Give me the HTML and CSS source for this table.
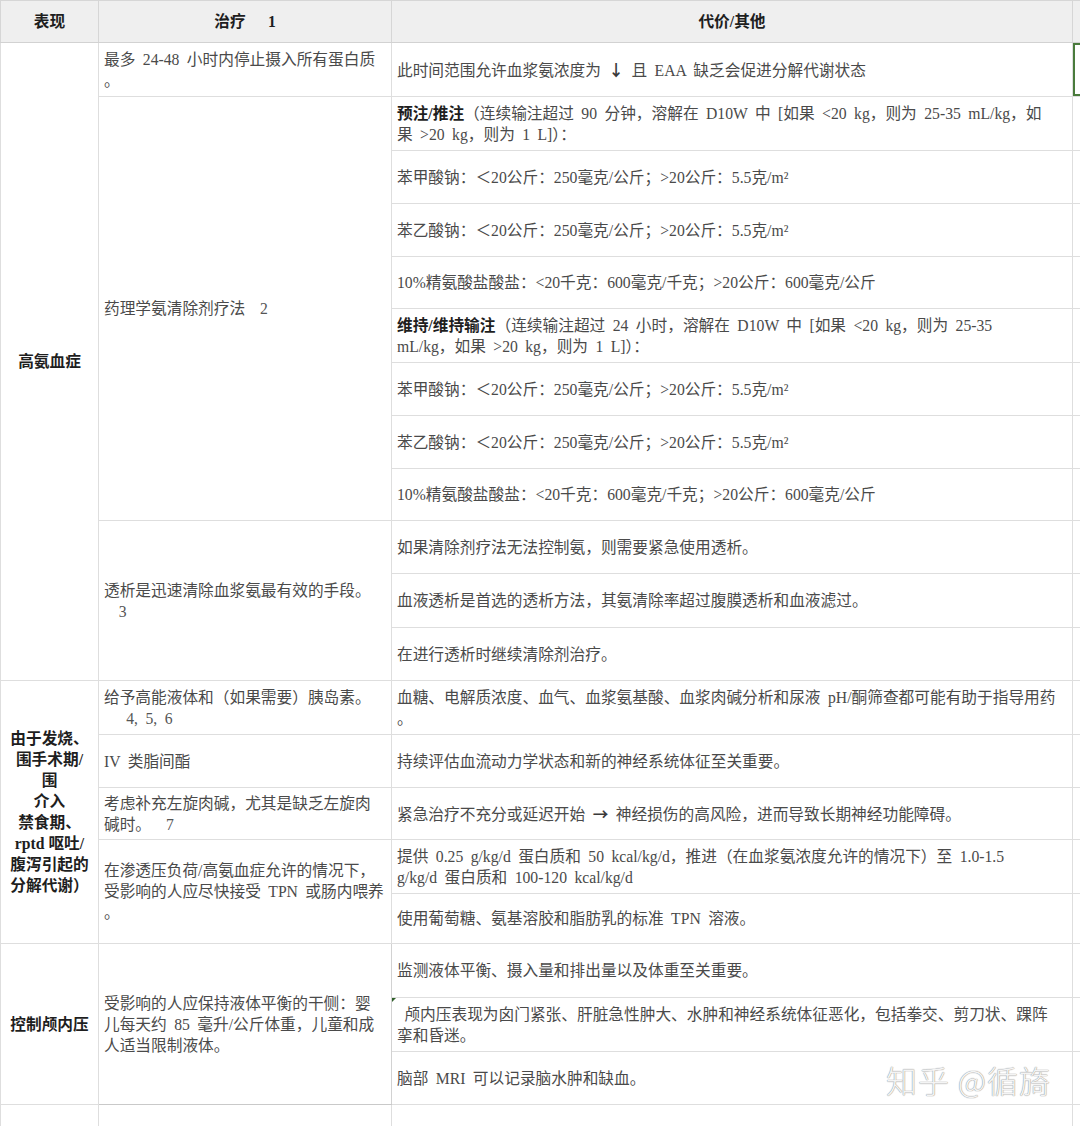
FILE: index.html
```html
<!DOCTYPE html>
<html lang="zh-CN">
<head>
<meta charset="utf-8">
<title>高氨血症治疗</title>
<link rel="stylesheet" href="styles.css">
</head>
<body>
<div class="sheet">
<table class="grid">
  <colgroup>
    <col class="c1"><col class="c2"><col class="c3"><col class="c4">
  </colgroup>
  <thead>
    <tr class="h42">
      <th>表现</th>
      <th>治疗&nbsp;&nbsp;&nbsp;1</th>
      <th>代价/其他</th>
      <th class="edge"></th>
    </tr>
  </thead>
  <tbody>
    <tr class="h54">
      <td rowspan="12" class="cat">高氨血症</td>
      <td>最多 24-48 小时内停止摄入所有蛋白质<br>。</td>
      <td>此时间范围允许血浆氨浓度为 <span class="sym">↓</span> 且 EAA 缺乏会促进分解代谢状态</td>
      <td class="edge sel"></td>
    </tr>
    <tr class="h54">
      <td rowspan="8">药理学氨清除剂疗法&nbsp;&nbsp;<span class="ref">2</span></td>
      <td><b>预注/推注</b>（连续输注超过 90 分钟，溶解在 D10W 中 [如果 &lt;20 kg，则为 25-35 mL/kg，如<br>果 &gt;20 kg，则为 1 L]）：</td>
      <td class="edge"></td>
    </tr>
    <tr class="h53"><td>苯甲酸钠：＜20公斤：250毫克/公斤；&gt;20公斤：5.5克/m²</td><td class="edge"></td></tr>
    <tr class="h53"><td>苯乙酸钠：＜20公斤：250毫克/公斤；&gt;20公斤：5.5克/m²</td><td class="edge"></td></tr>
    <tr class="h52"><td>10%精氨酸盐酸盐：&lt;20千克：600毫克/千克；&gt;20公斤：600毫克/公斤</td><td class="edge"></td></tr>
    <tr class="h54">
      <td><b>维持/维持输注</b>（连续输注超过 24 小时，溶解在 D10W 中 [如果 &lt;20 kg，则为 25-35<br>mL/kg，如果 &gt;20 kg，则为 1 L]）：</td>
      <td class="edge"></td>
    </tr>
    <tr class="h53"><td>苯甲酸钠：＜20公斤：250毫克/公斤；&gt;20公斤：5.5克/m²</td><td class="edge"></td></tr>
    <tr class="h53"><td>苯乙酸钠：＜20公斤：250毫克/公斤；&gt;20公斤：5.5克/m²</td><td class="edge"></td></tr>
    <tr class="h52"><td>10%精氨酸盐酸盐：&lt;20千克：600毫克/千克；&gt;20公斤：600毫克/公斤</td><td class="edge"></td></tr>
    <tr class="h53">
      <td rowspan="3">透析是迅速清除血浆氨最有效的手段。<br>&nbsp;&nbsp;<span class="ref">3</span></td>
      <td>如果清除剂疗法无法控制氨，则需要紧急使用透析。</td>
      <td class="edge"></td>
    </tr>
    <tr class="h54"><td>血液透析是首选的透析方法，其氨清除率超过腹膜透析和血液滤过。</td><td class="edge"></td></tr>
    <tr class="h53"><td>在进行透析时继续清除剂治疗。</td><td class="edge"></td></tr>

    <tr class="h54">
      <td rowspan="5" class="cat">由于发烧、<br>围手术期/<br>围<br>介入<br>禁食期、<br>rptd 呕吐/<br>腹泻引起的<br>分解代谢）</td>
      <td>给予高能液体和（如果需要）胰岛素。<br>&nbsp;&nbsp;&nbsp;<span class="ref">4, 5, 6</span></td>
      <td>血糖、电解质浓度、血气、血浆氨基酸、血浆肉碱分析和尿液 pH/酮筛查都可能有助于指导用药<br>。</td>
      <td class="edge"></td>
    </tr>
    <tr class="h53">
      <td>IV 类脂间酯</td>
      <td>持续评估血流动力学状态和新的神经系统体征至关重要。</td>
      <td class="edge"></td>
    </tr>
    <tr class="h52">
      <td>考虑补充左旋肉碱，尤其是缺乏左旋肉<br>碱时。&nbsp;&nbsp;<span class="ref">7</span></td>
      <td>紧急治疗不充分或延迟开始 <span class="sym">→</span> 神经损伤的高风险，进而导致长期神经功能障碍。</td>
      <td class="edge"></td>
    </tr>
    <tr class="h54">
      <td rowspan="2">在渗透压负荷/高氨血症允许的情况下，<br>受影响的人应尽快接受 TPN 或肠内喂养<br>。</td>
      <td>提供 0.25 g/kg/d 蛋白质和 50 kcal/kg/d，推进（在血浆氨浓度允许的情况下）至 1.0-1.5<br>g/kg/d 蛋白质和 100-120 kcal/kg/d</td>
      <td class="edge"></td>
    </tr>
    <tr class="h50"><td>使用葡萄糖、氨基溶胶和脂肪乳的标准 TPN 溶液。</td><td class="edge"></td></tr>

    <tr class="h54">
      <td rowspan="3" class="cat">控制颅内压</td>
      <td rowspan="3" class="boxed">受影响的人应保持液体平衡的干侧：婴<br>儿每天约 85 毫升/公斤体重，儿童和成<br>人适当限制液体。</td>
      <td>监测液体平衡、摄入量和排出量以及体重至关重要。</td>
      <td class="edge"></td>
    </tr>
    <tr class="h54"><td class="flagged"><span class="mark"></span>&nbsp;颅内压表现为囟门紧张、肝脏急性肿大、水肿和神经系统体征恶化，包括拳交、剪刀状、踝阵<br>挛和昏迷。</td><td class="edge"></td></tr>
    <tr class="h53"><td>脑部 MRI 可以记录脑水肿和缺血。</td><td class="edge"></td></tr>
    <tr class="h22"><td></td><td></td><td></td><td class="edge"></td></tr>
  </tbody>
</table>
<div class="watermark">知乎 @循旖</div>
</div>
</body>
</html>
```

FILE: styles.css
```css
html, body {
  margin: 0;
  padding: 0;
  background: #ffffff;
}

body {
  width: 1080px;
  height: 1126px;
  overflow: hidden;
  font-family: "Liberation Serif", "Noto Sans CJK SC", serif;
  font-size: 15.7px;
  color: #4a4a4a;
}

.sheet {
  position: relative;
  width: 1080px;
  height: 1126px;
  overflow: hidden;
}

.grid {
  width: 1080px;
  table-layout: fixed;
  border-collapse: collapse;
}

.c1 { width: 98px; }
.c2 { width: 293px; }
.c3 { width: 681px; }
.c4 { width: 8px; }

.grid th,
.grid td {
  border: 1px solid #dedede;
  padding: 0 5px;
  line-height: 21px;
  word-spacing: 3.5px;
  vertical-align: middle;
  text-align: left;
  overflow: hidden;
}

.grid th {
  background: #efefef;
  color: #1e1e1e;
  font-weight: 700;
  text-align: center;
  border-color: #d6d6d6;
  border-bottom-color: #d2d2d2;
}

.grid td.cat {
  text-align: center;
  font-weight: 700;
  color: #1e1e1e;
  padding: 0 3px;
  word-spacing: 0;
}

.grid b {
  color: #1e1e1e;
  font-weight: 700;
}

.ref {
  color: #555555;
}

.sym {
  font-family: "Noto Sans CJK SC", sans-serif;
  font-weight: 700;
  color: #3a3a3a;
}

.grid .edge {
  padding: 0;
  border-right: none;
}

.grid th.edge {
  background: #efefef;
}

.grid td.sel {
  box-shadow: inset 2px 0 0 #4a7b3c, inset 0 2px 0 #4a7b3c, inset 0 -2px 0 #4a7b3c;
}

.grid td.boxed {
  border-bottom-color: #c9c9c9;
  border-right-color: #d2d2d2;
}

.grid td.flagged {
  position: relative;
}

.mark {
  position: absolute;
  left: 0;
  top: 0;
  width: 0;
  height: 0;
  border-top: 4px solid #2f5f2a;
  border-right: 4px solid transparent;
}

.h22 { height: 22px; }
.h42 { height: 42px; }
.h50 { height: 50px; }
.h52 { height: 52px; }
.h53 { height: 53px; }
.h54 { height: 54px; }

.watermark {
  position: absolute;
  left: 886px;
  top: 1060px;
  font-family: "Noto Sans CJK SC", sans-serif;
  font-size: 31px;
  font-weight: 300;
  line-height: 40px;
  letter-spacing: 1px;
  color: #f4f4f4;
  text-shadow: 0 0 1px #8d8d8d, 0 0 1px #a5a5a5;
  white-space: nowrap;
}
```
